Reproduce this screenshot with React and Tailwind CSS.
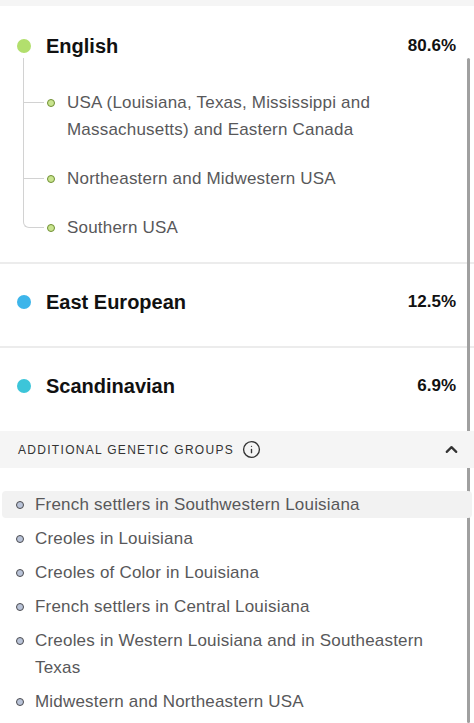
import { Info, ChevronUp } from 'lucide-react';

const englishRegions = [
  'USA (Louisiana, Texas, Mississippi and Massachusetts) and Eastern Canada',
  'Northeastern and Midwestern USA',
  'Southern USA',
];

const additionalGroups = [
  'French settlers in Southwestern Louisiana',
  'Creoles in Louisiana',
  'Creoles of Color in Louisiana',
  'French settlers in Central Louisiana',
  'Creoles in Western Louisiana and in Southeastern Texas',
  'Midwestern and Northeastern USA',
];

const TitleRow = ({ color, name, pct }) => (
  <div className="flex h-[34px] items-center justify-between">
    <div className="flex items-center gap-[15px]">
      <span className={`h-[14px] w-[14px] shrink-0 rounded-full ${color}`} />
      <span className="text-[20px] font-bold text-[#111]">{name}</span>
    </div>
    <span className="text-[17px] font-bold text-[#111]">{pct}</span>
  </div>
);

const RegionItem = ({ label, first, last }) => (
  <li className="relative flex pl-[24px]">
    {last ? (
      <span className="absolute left-0 top-[-22px] h-[35.5px] w-[21px] rounded-bl-[6px] border-b-[1.5px] border-l-[1.5px] border-[#d2d2d2]" />
    ) : (
      <>
        <span
          className={`absolute bottom-0 left-0 border-l-[1.5px] border-[#d2d2d2] ${
            first ? 'top-[-31px]' : 'top-[-22px]'
          }`}
        />
        <span className="absolute left-0 top-[12.75px] w-[21px] border-t-[1.5px] border-[#d2d2d2]" />
      </>
    )}
    <span className="mt-[9.5px] h-[8px] w-[8px] shrink-0 rounded-full border-[1.5px] border-[#6f8f33] bg-[#c9e48f]" />
    <span className="ml-[12px] text-[17px] leading-[27px] tracking-[0.2px] text-[#58585a]">
      {label}
    </span>
  </li>
);

const Divider = () => <div className="h-[2px] bg-[#ececec]" />;

export default function App() {
  return (
    <div
      className="relative min-h-screen w-full overflow-hidden bg-white"
      style={{ fontFamily: '"Liberation Sans", Arial, sans-serif' }}
    >
      <div className="h-[6px] bg-[#f5f5f5]" />

      {/* English */}
      <section className="px-[17px] pb-[21px] pr-[18px] pt-[23px]">
        <TitleRow color="bg-[#b2df6d]" name="English" pct="80.6%" />
        <ul className="ml-[6px] flex flex-col gap-[22px] pt-[26px]">
          {englishRegions.map((r, i) => (
            <RegionItem key={r} label={r} first={i === 0} last={i === englishRegions.length - 1} />
          ))}
        </ul>
      </section>
      <Divider />

      <section className="px-[17px] pb-[27px] pr-[18px] pt-[21px]">
        <TitleRow color="bg-[#3db5ea]" name="East European" pct="12.5%" />
      </section>
      <Divider />

      <section className="px-[17px] pb-[28px] pr-[18px] pt-[21px]">
        <TitleRow color="bg-[#3cc5d9]" name="Scandinavian" pct="6.9%" />
      </section>

      {/* Additional groups header */}
      <div className="relative z-10 flex h-[37px] items-center justify-between bg-[#f5f5f5] pl-[18px] pr-[13px]">
        <div className="flex items-center gap-[8px]">
          <span className="text-[12px] tracking-[1.3px] text-[#333]">
            ADDITIONAL GENETIC GROUPS
          </span>
          <Info size={19} strokeWidth={1.7} className="text-[#333]" />
        </div>
        <ChevronUp size={19} strokeWidth={2.8} className="text-[#333]" />
      </div>

      <ul className="flex flex-col gap-[7px] px-[2px] pt-[23px]">
        {additionalGroups.map((g, i) => (
          <li
            key={g}
            className={`relative flex rounded-[4px] pl-[14px] pr-[14px] ${
              i === 0 ? 'z-10 bg-[#f2f2f2]' : ''
            }`}
          >
            <span className="mt-[9.5px] h-[8px] w-[8px] shrink-0 rounded-full border-[1.5px] border-[#4b4b4f] bg-[#b9c3d8]" />
            <span className="ml-[11px] text-[17px] leading-[27px] tracking-[0.2px] text-[#58585a]">
              {g}
            </span>
          </li>
        ))}
      </ul>

      {/* scrollbar */}
      <div className="absolute bottom-0 right-[4px] top-[58px] w-[3px] rounded-full bg-[#a0a0a0]" />
    </div>
  );
}
